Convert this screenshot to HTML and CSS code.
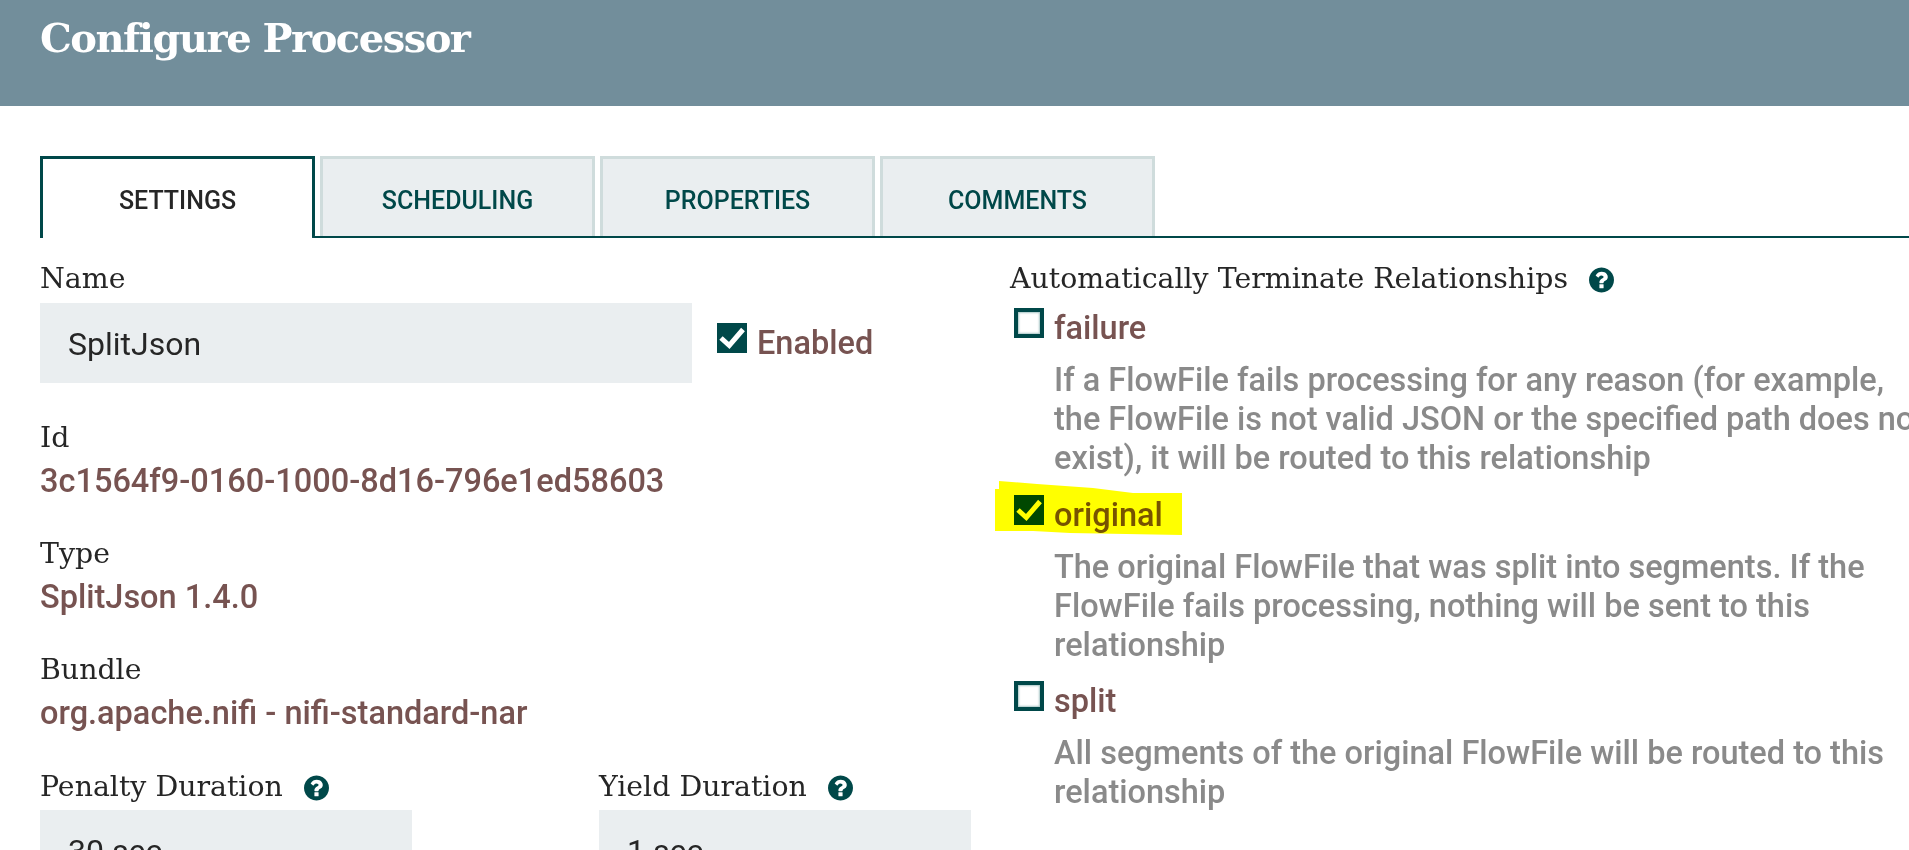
FILE: index.html
```html
<!DOCTYPE html>
<html lang="en">
<head>
<meta charset="utf-8">
<title>Configure Processor</title>
<link rel="stylesheet" href="styles.css">
</head>
<body>
<svg width="0" height="0" class="defs" aria-hidden="true">
  <symbol id="q" viewBox="0 0 1536 1536"><path d="M896 1248v-192q0-14-9-23t-23-9h-192q-14 0-23 9t-9 23v192q0 14 9 23t23 9h192q14 0 23-9t9-23zm256-672q0-88-55.5-163t-138.5-116-170-41q-243 0-371 213-15 24 8 42l132 100q7 6 19 6 16 0 25-12 53-68 86-92 34-24 86-24 48 0 85.5 26t37.5 59q0 38-20 61t-68 45q-63 28-115.5 86.5t-52.5 125.5v36q0 14 9 23t23 9h192q14 0 23-9t9-23q0-19 21.5-49.5t54.5-49.5q32-18 49-28.5t46-35 44.5-48 28-60.5 12.5-81zm384 192q0 209-103 385.5t-279.5 279.5-385.5 103-385.5-103-279.5-279.5-103-385.5 103-385.5 279.5-279.5 385.5-103 385.5 103 279.5 279.5 103 385.5z"/></symbol>
  <symbol id="c" viewBox="0 0 30 30"><rect width="30" height="30" fill="#004849"/><polyline class="tick" points="4,15 12.3,22.5 26,6.5"/></symbol>
</svg>
<header class="bar"><h1 class="title">Configure Processor</h1></header>
<main class="panel">
  <nav class="tabs">
    <div class="tab active">SETTINGS</div>
    <div class="tab">SCHEDULING</div>
    <div class="tab">PROPERTIES</div>
    <div class="tab">COMMENTS</div>
  </nav>
  <div class="columns">
    <section class="left">
      <div class="label">Name</div>
      <div class="name-row">
        <div class="input wide">SplitJson</div>
        <svg class="box checked"><use href="#c"/></svg>
        <span class="value">Enabled</span>
      </div>
      <div class="label gap-id">Id</div>
      <div class="value line">3c1564f9-0160-1000-8d16-796e1ed58603</div>
      <div class="label gap">Type</div>
      <div class="value line">SplitJson 1.4.0</div>
      <div class="label gap">Bundle</div>
      <div class="value line">org.apache.nifi - nifi-standard-nar</div>
      <div class="durations">
        <div class="duration">
          <div class="label">Penalty Duration <svg class="help"><use href="#q"/></svg></div>
          <div class="input short">30 sec</div>
        </div>
        <div class="duration">
          <div class="label">Yield Duration <svg class="help"><use href="#q"/></svg></div>
          <div class="input short">1 sec</div>
        </div>
      </div>
    </section>
    <section class="right">
      <div class="label">Automatically Terminate Relationships <svg class="help"><use href="#q"/></svg></div>
      <div class="rel first">
        <span class="box empty"></span><span class="value">failure</span>
      </div>
      <p class="desc">If a FlowFile fails processing for any reason (for example, the FlowFile is not valid JSON or the specified path does not exist), it will be routed to this relationship</p>
      <div class="rel">
        <svg class="box checked"><use href="#c"/></svg><span class="value">original</span>
      </div>
      <p class="desc">The original FlowFile that was split into segments. If the FlowFile fails processing, nothing will be sent to this relationship</p>
      <div class="rel tight">
        <span class="box empty"></span><span class="value">split</span>
      </div>
      <p class="desc tight-desc">All segments of the original FlowFile will be routed to this relationship</p>
    </section>
  </div>
</main>
<svg class="marker" viewBox="0 0 1909 850" aria-hidden="true"><polygon points="999,481 1037,484 1093,488 1133,493 1182,493 1182,535 1070,533 1033,531 995,531 995,489 999,489"/></svg>
</body>
</html>
```
FILE: styles.css
```css
html, body { margin: 0; padding: 0; height: 850px; overflow: hidden; background: #fff; }
body { width: 1909px; font-family: Roboto, sans-serif; position: relative; }
.defs { position: absolute; }
.bar { height: 106px; background: #728e9b; padding-left: 40px; box-sizing: border-box; }
.title { margin: 0; padding-top: 14px; font: bold 40px/48px "DejaVu Serif", serif; letter-spacing: -1.5px; color: #fff; }
.panel { padding: 50px 0 0 40px; }
.tabs { display: flex; gap: 5px; border-bottom: 2px solid #004849; height: 80px; }
.tab { width: 275px; height: 80px; box-sizing: border-box; border: 3px solid #cfdcdc; border-bottom: 0; background: #eaeef0; color: #004849; font: 500 25px/84px Roboto, sans-serif; text-align: center; }
.tab.active { background: #fff; color: #262626; border: 3px solid #004849; border-bottom: 0; height: 82px; border-radius: 0 0 3px 0; position: relative; }
.columns { display: flex; }
.left { width: 970px; flex: none; padding-top: 21px; }
.right { width: 930px; flex: none; padding-top: 21px; }
.label { font: 400 28.4px/39px "DejaVu Serif", serif; color: #262626; white-space: nowrap; }
.value { font: 500 32.5px/39px Roboto, sans-serif; color: #775351; }
.line { margin-top: 5px; }
.input { background: #eaeef0; color: #262626; font: 400 32px/82px Roboto, sans-serif; padding-left: 28px; height: 80px; box-sizing: border-box; }
.wide { width: 652px; }
.short { width: 372px; margin-top: 4px; }
.name-row { display: flex; align-items: center; margin-top: 5px; }
.box { width: 30px; height: 30px; flex: none; display: block; box-sizing: border-box; }
.name-row .box { margin: -10px 10px 0 25px; }
.name-row .value { margin-top: 0; }
.tick { fill: none; stroke: #fff; stroke-width: 5px; filter: blur(0.7px); }
.empty { border: 4px solid #004849; box-shadow: inset 0 0 2px 1px #a9c6c6; background: #fff; }
.gap-id { margin-top: 35px; }
.gap { margin-top: 33px; }
.durations { display: flex; gap: 187px; margin-top: 34px; }
.help { width: 25px; height: 26px; fill: #004849; vertical-align: -5px; margin-left: 12px; }
.rel { display: flex; align-items: flex-start; padding-left: 4px; gap: 10px; height: 39px; }
.rel .value { margin-top: 1px; }
.rel.first { margin-top: 10px; }
.rel.tight { margin-top: -1px; }
.desc { margin: 14px 0 17px 44px; font: 500 32.5px/39px Roboto, sans-serif; color: #8a8a8a; width: 880px; }
.desc.tight-desc { margin-top: 14px; }
.marker { position: absolute; left: 0; top: 0; width: 1909px; height: 850px; mix-blend-mode: multiply; pointer-events: none; }
.marker polygon { fill: #ff0; }
```
